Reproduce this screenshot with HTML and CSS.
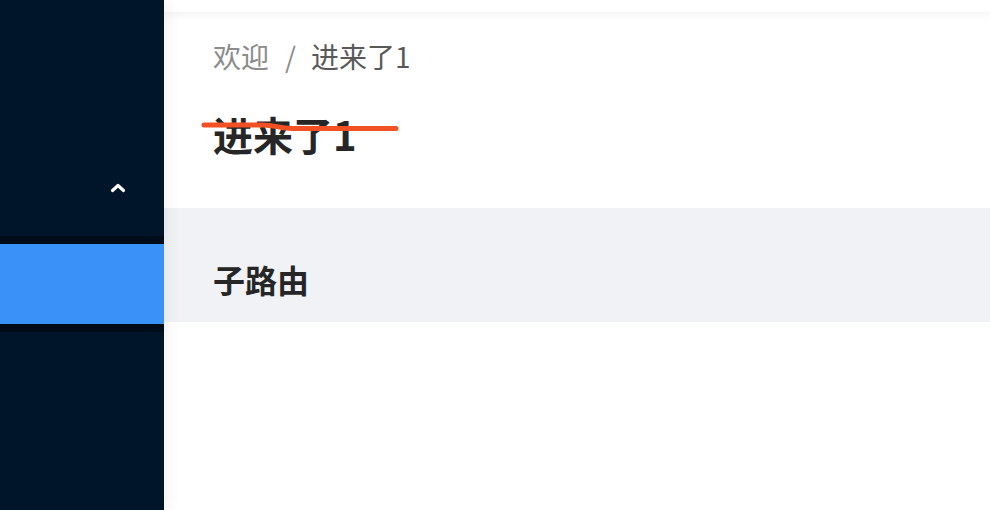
FILE: index.html
```html
<!DOCTYPE html>
<html lang="zh-CN">

<head>
    <meta charset="UTF-8">
    <meta name="viewport" content="width=device-width, initial-scale=1.0">
    <title>进来了1</title>
    <link rel="stylesheet" href="styles.css">
</head>

<body>
    <div class="layout">
        <aside class="sider">
            <div class="sider-top"></div>
            <div class="submenu-title">
                <svg class="arrow" width="16" height="10" viewBox="0 0 16 10">
                    <path d="M2.5 7.5 L8 2.5 L13.5 7.5" fill="none" stroke="#fff" stroke-width="3.2"
                        stroke-linecap="round" stroke-linejoin="round" />
                </svg>
            </div>
            <ul class="submenu">
                <li class="menu-item active"></li>
            </ul>
        </aside>

        <div class="main">
            <header class="header"></header>

            <div class="page-header">
                <div class="breadcrumb">
                    <span class="crumb">欢迎</span>
                    <span class="separator">/</span>
                    <span class="crumb current">进来了1</span>
                </div>
                <h1 class="page-title">
                    进来了1
                    <!-- annotation stroke drawn over the title -->
                    <svg class="strike" width="200" height="14" viewBox="0 0 200 14">
                        <path d="M3 5 L62 5 C74 5 78 8.5 92 8.5 L195 8.5" fill="none" stroke="#f25124"
                            stroke-width="5" stroke-linecap="round" />
                    </svg>
                </h1>
            </div>

            <section class="content">
                <h3 class="content-title">子路由</h3>
            </section>
        </div>
    </div>
</body>

</html>
```

FILE: styles.css
```css
/* basic admin layout: dark sider, page header, grey content band */

* {
    box-sizing: border-box;
}

body {
    margin: 0;
    font-family: "Noto Sans CJK SC", "Noto Sans", sans-serif;
    background: #fff;
}

.layout {
    display: flex;
    min-height: 510px;
}

/* sider */

.sider {
    position: relative;
    z-index: 2;
    flex: 0 0 164px;
    width: 164px;
    display: flex;
    flex-direction: column;
    background: #001529;
    box-shadow: 2px 0 16px rgba(0, 0, 0, 0.07);
}

.sider-top {
    height: 156px;
}

.submenu-title {
    height: 80px;
    padding: 0 38px 16px 0;
    display: flex;
    align-items: center;
    justify-content: flex-end;
}

.arrow {
    display: block;
}

.submenu {
    list-style: none;
    margin: 0;
    padding: 8px 0;
    background: #000c17;
}

.menu-item {
    height: 80px;
}

.menu-item.active {
    background: #3a91f8;
}

/* main area */

.main {
    flex: 1;
    display: flex;
    flex-direction: column;
    min-width: 0;
}

.header {
    position: relative;
    z-index: 1;
    height: 12px;
    background: #fff;
    box-shadow: 0 2px 8px rgba(0, 0, 0, 0.06);
}

.page-header {
    padding: 22px 48px 46px 49px;
    background: #fff;
}

.breadcrumb {
    display: flex;
    align-items: center;
    height: 44px;
    font-size: 28px;
    line-height: 44px;
    color: #8c8c8c;
}

.separator {
    margin: 0 15px 0 16px;
    color: #8c8c8c;
}

.crumb.current {
    color: #595959;
}

.page-title {
    position: relative;
    margin: 28px 0 0;
    height: 56px;
    font-size: 40px;
    line-height: 56px;
    font-weight: 700;
    color: #262626;
}

.strike {
    position: absolute;
    left: -12px;
    top: 14px;
}

.content {
    height: 114px;
    padding: 47px 49px 0;
    background: #f0f2f5;
}

.content-title {
    margin: 0;
    font-size: 32px;
    line-height: 48px;
    font-weight: 700;
    color: #262626;
}
```
